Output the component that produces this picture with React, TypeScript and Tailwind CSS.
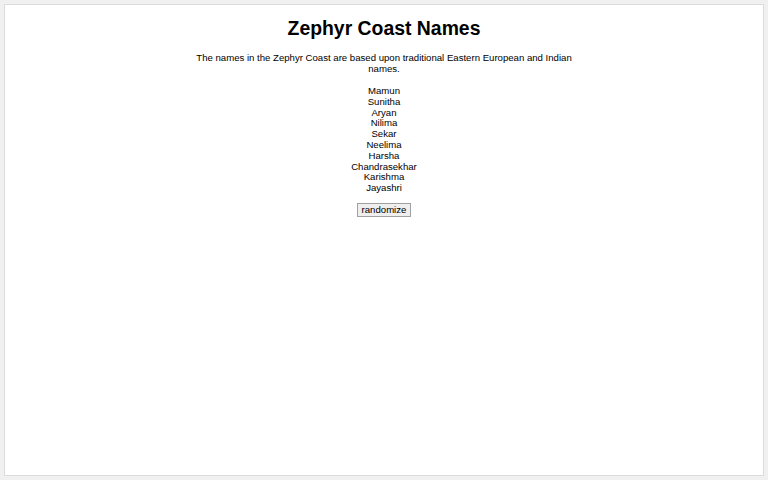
import React, { useState } from 'react';

const initialNames = [
  'Mamun',
  'Sunitha',
  'Aryan',
  'Nilima',
  'Sekar',
  'Neelima',
  'Harsha',
  'Chandrasekhar',
  'Karishma',
  'Jayashri',
];

const App: React.FC = () => {
  const [names, setNames] = useState(initialNames);

  const randomize = () => {
    const next = [...names];
    for (let i = next.length - 1; i > 0; i--) {
      const j = Math.floor(Math.random() * (i + 1));
      [next[i], next[j]] = [next[j], next[i]];
    }
    setNames(next);
  };

  return (
    <div className="h-[480px] w-[768px] bg-[#f0f0f0] p-[4px] font-['Liberation_Sans',Arial,sans-serif] text-black">
      <div className="flex h-full flex-col items-center border border-[#dcdcdc] bg-white pt-[11px]">
        <h1 className="text-[19.4px] font-bold leading-[24px]">Zephyr Coast Names</h1>

        {/* Intro */}
        <p className="mt-[12px] max-w-[384px] text-center text-[9.6px] leading-[11px]">
          The names in the Zephyr Coast are based upon traditional Eastern European and Indian names.
        </p>

        {/* Name list */}
        <ul className="mt-[12px] flex flex-col items-center text-[9.6px] leading-[10.8px]">
          {names.map((name) => (
            <li key={name}>{name}</li>
          ))}
        </ul>

        <button
          onClick={randomize}
          className="mt-[9px] border border-[#a0a0a0] bg-[#efefef] px-[4px] text-[9.6px] leading-[12px]"
        >
          randomize
        </button>
      </div>
    </div>
  );
};

export default App;
